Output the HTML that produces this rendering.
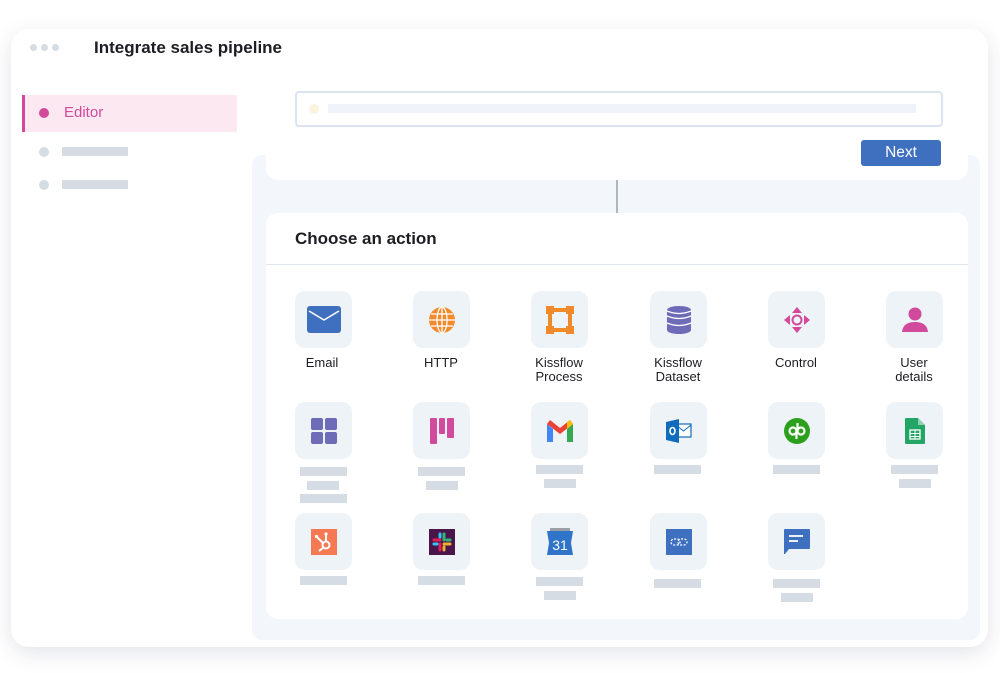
<!DOCTYPE html>
<html><head><meta charset="utf-8"><style>
*{margin:0;padding:0;box-sizing:border-box}
body{width:1000px;height:673px;background:#fff;position:relative;overflow:hidden;font-family:"Liberation Sans",sans-serif;color:#1d1d22}
.a{position:absolute}
.card{left:11px;top:29px;width:977px;height:618px;background:#fff;border-radius:18px;box-shadow:0 6px 22px rgba(40,50,80,.13)}
.dot{width:7px;height:7px;border-radius:50%;background:#d6dce3}
.bar{background:#d6dce3;height:9px}
.tile{width:57px;height:57px;border-radius:10px;background:#eef3f7;display:flex;align-items:center;justify-content:center}
.lbl{width:100px;text-align:center;font-size:13px;line-height:14px;color:#1d1d22}
</style></head><body>
<div class="a card"></div>
<div class="a dot" style="left:30px;top:44px"></div>
<div class="a dot" style="left:41px;top:44px"></div>
<div class="a dot" style="left:52px;top:44px"></div>
<div class="a" style="left:94px;top:38px;font-size:17px;font-weight:bold">Integrate sales pipeline</div>

<div class="a" style="left:22px;top:95px;width:215px;height:37px;background:#fbe8f1;border-left:3px solid #d14a9b"></div>
<div class="a" style="left:39px;top:108px;width:10px;height:10px;border-radius:50%;background:#d14a9b"></div>
<div class="a" style="left:64px;top:104px;font-size:15px;line-height:18px;color:#d14a9b">Editor</div>
<div class="a" style="left:39px;top:147px;width:10px;height:10px;border-radius:50%;background:#d6dce3"></div>
<div class="a bar" style="left:62px;top:147px;width:66px"></div>
<div class="a" style="left:39px;top:180px;width:10px;height:10px;border-radius:50%;background:#d6dce3"></div>
<div class="a bar" style="left:62px;top:180px;width:66px"></div>

<div class="a" style="left:252px;top:155px;width:728px;height:485px;background:#f3f6fa;border-radius:10px"></div>
<div class="a" style="left:266px;top:60px;width:702px;height:120px;background:#fff;border-radius:0 0 12px 12px"></div>
<div class="a" style="left:295px;top:91px;width:648px;height:36px;border:2px solid #dbe3f1;border-radius:4px;background:#fff"></div>
<div class="a" style="left:309px;top:104px;width:10px;height:10px;border-radius:50%;background:#fcf3df"></div>
<div class="a" style="left:328px;top:104px;width:588px;height:9px;background:#f0f3f9"></div>
<div class="a" style="left:861px;top:140px;width:80px;height:26px;background:#3f6fbf;border-radius:3px;color:#fff;font-size:15.5px;text-align:center;line-height:26px">Next</div>
<div class="a" style="left:616px;top:180px;width:2px;height:33px;background:#aeb6c2"></div>

<div class="a" style="left:266px;top:213px;width:702px;height:406px;background:#fff;border-radius:12px"></div>
<div class="a" style="left:295px;top:229px;font-size:17px;font-weight:bold">Choose an action</div>
<div class="a" style="left:266px;top:264px;width:702px;height:1px;background:#dfe6f2"></div>

<!-- row 1 -->
<div class="a tile" style="left:295px;top:291px"><svg width="34" height="28" viewBox="0 0 34 28"><rect x="0" y="0" width="34" height="27" rx="3" fill="#3f6fbf"/><path d="M2 5 L17 14 L32 5" stroke="#fff" stroke-width="1.6" fill="none"/></svg></div>
<div class="a lbl" style="left:272px;top:356px">Email</div>
<div class="a tile" style="left:413px;top:291px"><svg width="28" height="28" viewBox="0 0 28 28"><circle cx="14" cy="14" r="13" fill="#f28a2c"/><g stroke="#fff" stroke-width="1.3" fill="none"><ellipse cx="14" cy="14" rx="5" ry="13"/><line x1="14" y1="1" x2="14" y2="27"/><line x1="1" y1="14" x2="27" y2="14"/><line x1="3" y1="8" x2="25" y2="8"/><line x1="3" y1="20" x2="25" y2="20"/></g></svg></div>
<div class="a lbl" style="left:391px;top:356px">HTTP</div>
<div class="a tile" style="left:531px;top:291px"><svg width="28" height="28" viewBox="0 0 28 28"><rect x="4" y="4" width="20" height="20" fill="none" stroke="#f28a2c" stroke-width="4"/><rect x="0" y="0" width="8" height="8" fill="#f28a2c"/><rect x="20" y="0" width="8" height="8" fill="#f28a2c"/><rect x="0" y="20" width="8" height="8" fill="#f28a2c"/><rect x="20" y="20" width="8" height="8" fill="#f28a2c"/></svg></div>
<div class="a lbl" style="left:509px;top:356px">Kissflow<br>Process</div>
<div class="a tile" style="left:650px;top:291px"><svg width="26" height="28" viewBox="0 0 26 28"><g fill="#6e6bb8"><ellipse cx="13" cy="4" rx="12" ry="4"/><rect x="1" y="4" width="24" height="20"/><ellipse cx="13" cy="24" rx="12" ry="4"/></g><g stroke="#fff" stroke-width="1.3" fill="none"><path d="M1 10 Q13 15 25 10"/><path d="M1 17 Q13 22 25 17"/><path d="M1 5 Q13 10 25 5"/></g></svg></div>
<div class="a lbl" style="left:628px;top:356px">Kissflow<br>Dataset</div>
<div class="a tile" style="left:768px;top:291px"><svg width="28" height="28" viewBox="0 0 28 28"><g fill="#d14a9b"><path d="M14 1 L19 7 L9 7Z"/><path d="M14 27 L19 21 L9 21Z"/><path d="M1 14 L7 9 L7 19Z"/><path d="M27 14 L21 9 L21 19Z"/></g><circle cx="14" cy="14" r="4.5" fill="none" stroke="#d14a9b" stroke-width="2"/></svg></div>
<div class="a lbl" style="left:746px;top:356px">Control</div>
<div class="a tile" style="left:886px;top:291px"><svg width="28" height="28" viewBox="0 0 28 28"><circle cx="14" cy="8" r="6.5" fill="#d14a9b"/><path d="M1 26 Q2 16 14 16 Q26 16 27 26Z" fill="#d14a9b"/></svg></div>
<div class="a lbl" style="left:864px;top:356px">User<br>details</div>

<!-- row 2 -->
<div class="a tile" style="left:295px;top:402px"><svg width="26" height="26" viewBox="0 0 26 26"><g fill="#6e6bb8"><rect width="12" height="12" rx="2"/><rect x="14" width="12" height="12" rx="2"/><rect y="14" width="12" height="12" rx="2"/><rect x="14" y="14" width="12" height="12" rx="2"/></g></svg></div>
<div class="a bar" style="left:300px;top:467px;width:47px"></div>
<div class="a bar" style="left:307px;top:481px;width:32px"></div>
<div class="a bar" style="left:300px;top:494px;width:47px"></div>
<div class="a tile" style="left:413px;top:402px"><svg width="24" height="26" viewBox="0 0 24 26"><g fill="#d14a9b"><rect x="0" y="0" width="7" height="26" rx="1"/><rect x="9" y="0" width="6" height="16" rx="1"/><rect x="17" y="0" width="7" height="20" rx="1"/></g></svg></div>
<div class="a bar" style="left:418px;top:467px;width:47px"></div>
<div class="a bar" style="left:426px;top:481px;width:32px"></div>
<div class="a tile" style="left:531px;top:402px"><svg width="26" height="22" viewBox="0 0 26 22"><path d="M0 4 L0 22 L6 22 L6 9Z" fill="#4285f4"/><path d="M20 9 L20 22 L26 22 L26 4Z" fill="#34a853"/><path d="M0 4 L13 14 L26 4 L23 0 L13 8 L3 0Z" fill="#ea4335"/><path d="M20 9 L26 4 L23 0 L20 2Z" fill="#fbbc04"/></svg></div>
<div class="a bar" style="left:536px;top:465px;width:47px"></div>
<div class="a bar" style="left:544px;top:479px;width:32px"></div>
<div class="a tile" style="left:650px;top:402px"><svg width="26" height="24" viewBox="0 0 26 24"><rect x="10" y="5" width="15" height="13" fill="#fff" stroke="#0f6cbd" stroke-width="1.2"/><path d="M10 6 L17.5 12 L25 6" stroke="#0f6cbd" fill="none"/><path d="M0 3 L13 0 L13 24 L0 21Z" fill="#0f6cbd"/><ellipse cx="6.5" cy="12" rx="2.5" ry="3.5" fill="none" stroke="#fff" stroke-width="1.6"/></svg></div>
<div class="a bar" style="left:654px;top:465px;width:47px"></div>
<div class="a tile" style="left:768px;top:402px"><svg width="26" height="26" viewBox="0 0 26 26"><circle cx="13" cy="13" r="13" fill="#2ca01c"/><g stroke="#fff" stroke-width="2.2" fill="none"><circle cx="9" cy="13" r="3.5"/><circle cx="17" cy="13" r="3.5"/><line x1="12.5" y1="13" x2="12.5" y2="21"/><line x1="13.5" y1="5" x2="13.5" y2="13"/></g></svg></div>
<div class="a bar" style="left:773px;top:465px;width:47px"></div>
<div class="a tile" style="left:886px;top:402px"><svg width="20" height="26" viewBox="0 0 20 26"><path d="M0 1 Q0 0 1 0 L13 0 L20 7 L20 25 Q20 26 19 26 L1 26 Q0 26 0 25Z" fill="#23a566"/><path d="M13 0 L13 7 L20 7Z" fill="#8ed1b1"/><rect x="5" y="12" width="10" height="9" fill="none" stroke="#fff" stroke-width="1.3"/><line x1="5" y1="15.5" x2="15" y2="15.5" stroke="#fff"/><line x1="5" y1="18.5" x2="15" y2="18.5" stroke="#fff"/><line x1="10" y1="12" x2="10" y2="21" stroke="#fff"/></svg></div>
<div class="a bar" style="left:891px;top:465px;width:47px"></div>
<div class="a bar" style="left:899px;top:479px;width:32px"></div>

<!-- row 3 -->
<div class="a tile" style="left:295px;top:513px"><svg width="26" height="26" viewBox="0 0 26 26"><rect width="26" height="26" fill="#f57a53"/><g stroke="#fff" stroke-width="2" fill="none"><circle cx="15" cy="16" r="3.5"/><line x1="15" y1="12.5" x2="15" y2="6"/><line x1="12" y1="14" x2="6" y2="8"/><line x1="12.5" y1="18.5" x2="8" y2="22"/></g><circle cx="15" cy="5" r="1.6" fill="#fff"/><circle cx="5.5" cy="7.5" r="1.6" fill="#fff"/></svg></div>
<div class="a bar" style="left:300px;top:576px;width:47px"></div>
<div class="a tile" style="left:413px;top:513px"><svg width="26" height="26" viewBox="0 0 26 26"><rect width="26" height="26" fill="#4a154b"/><g stroke-width="3" stroke-linecap="round"><line x1="5" y1="11" x2="11" y2="11" stroke="#e01e5a"/><line x1="11" y1="5" x2="11" y2="8" stroke="#36c5f0"/><line x1="15" y1="5" x2="15" y2="11" stroke="#2eb67d"/><line x1="21" y1="11" x2="18" y2="11" stroke="#2eb67d"/><line x1="15" y1="15" x2="21" y2="15" stroke="#ecb22e"/><line x1="15" y1="21" x2="15" y2="18" stroke="#ecb22e"/><line x1="11" y1="21" x2="11" y2="15" stroke="#e01e5a"/><line x1="5" y1="15" x2="8" y2="15" stroke="#36c5f0"/></g></svg></div>
<div class="a bar" style="left:418px;top:576px;width:47px"></div>
<div class="a tile" style="left:531px;top:513px"><svg width="26" height="28" viewBox="0 0 26 28"><rect x="3" y="0" width="20" height="4" fill="#9aa0a6"/><path d="M0 3 L26 3 L24 15 L26 27 L0 27 L2 15Z" fill="#2f74c8"/><text x="13" y="22" font-family="Liberation Sans" font-size="14" fill="#fff" text-anchor="middle">31</text></svg></div>
<div class="a bar" style="left:536px;top:577px;width:47px"></div>
<div class="a bar" style="left:544px;top:591px;width:32px"></div>
<div class="a tile" style="left:650px;top:513px"><svg width="26" height="26" viewBox="0 0 26 26"><rect width="26" height="26" fill="#3f6fbf"/><g stroke="#fff" stroke-width="1.3" fill="none" stroke-dasharray="2 1.5"><rect x="5" y="10" width="9" height="6" rx="3"/><rect x="12" y="10" width="9" height="6" rx="3"/></g></svg></div>
<div class="a bar" style="left:654px;top:579px;width:47px"></div>
<div class="a tile" style="left:768px;top:513px"><svg width="26" height="26" viewBox="0 0 26 26"><path d="M0 1 Q0 0 1 0 L25 0 Q26 0 26 1 L26 19 Q26 20 25 20 L5 20 L1 25 L0 25Z" fill="#3f6fbf"/><line x1="5" y1="7" x2="19" y2="7" stroke="#fff" stroke-width="1.8"/><line x1="5" y1="12" x2="14" y2="12" stroke="#fff" stroke-width="1.8"/></svg></div>
<div class="a bar" style="left:773px;top:579px;width:47px"></div>
<div class="a bar" style="left:781px;top:593px;width:32px"></div>
</body></html>
